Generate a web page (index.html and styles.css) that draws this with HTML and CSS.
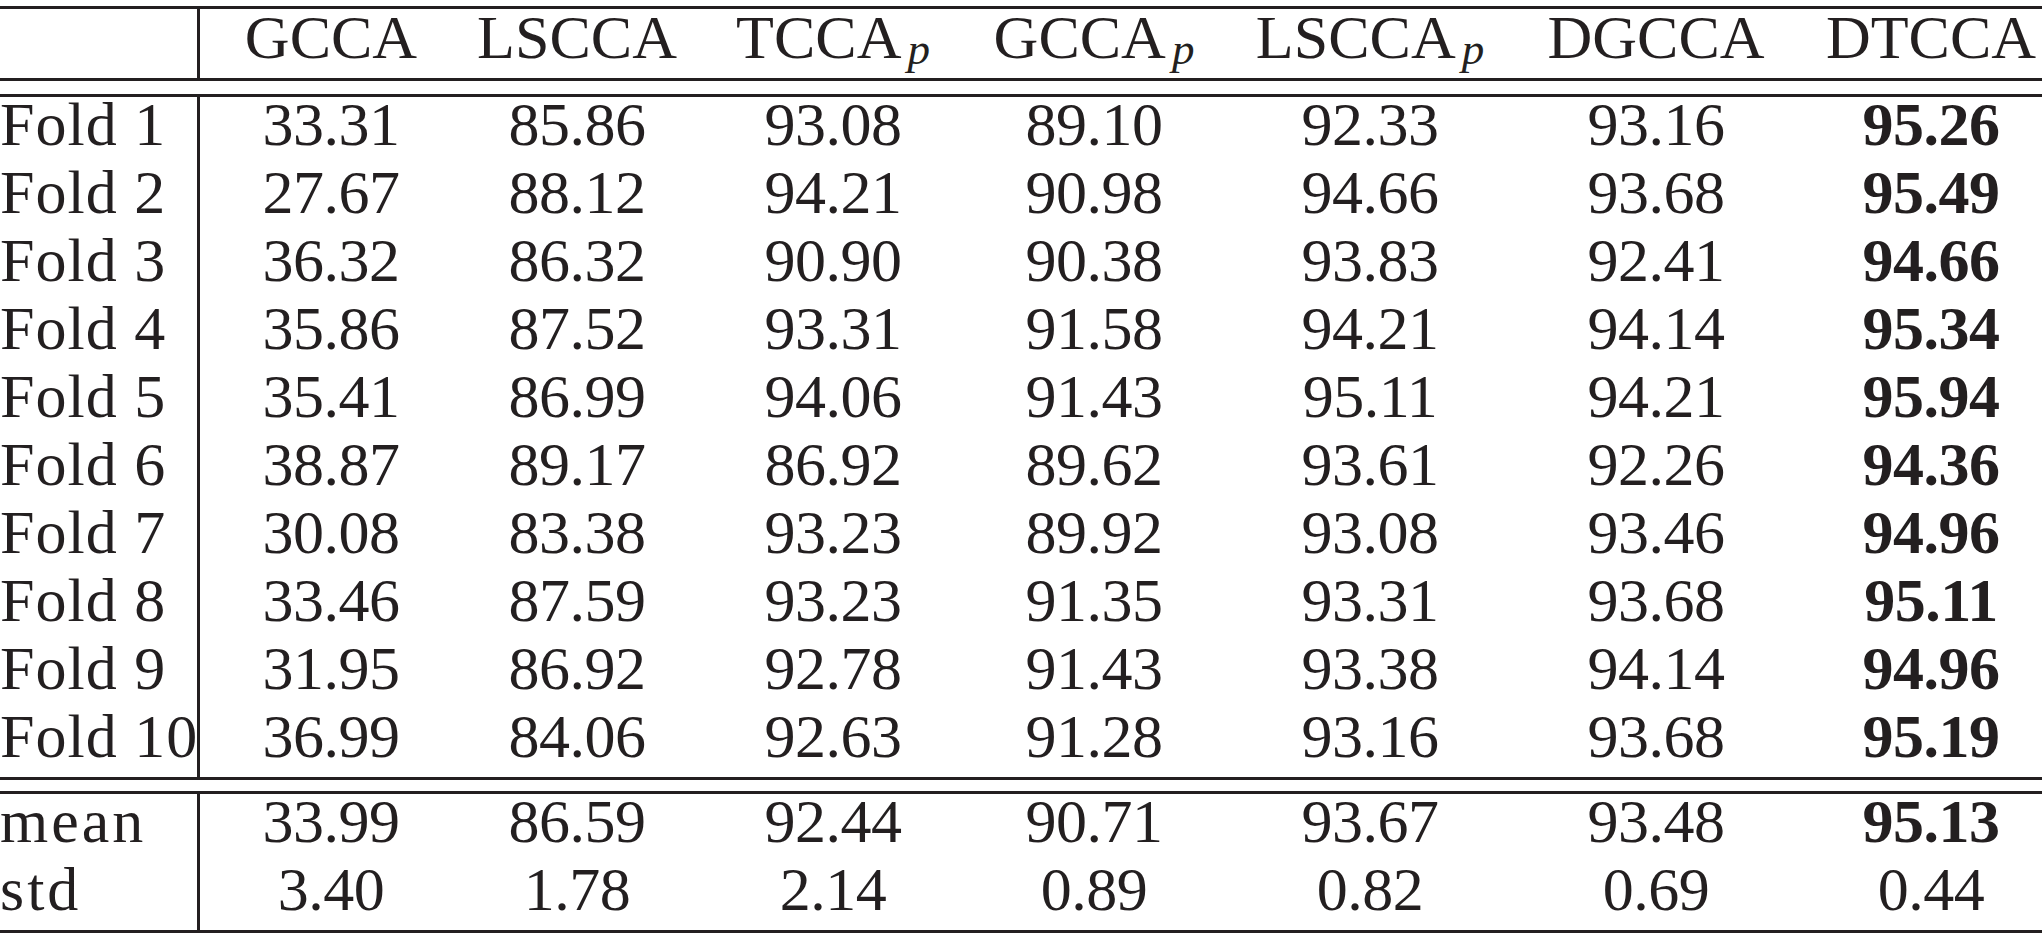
FILE: index.html
```html
<!DOCTYPE html>
<html>
<head>
<meta charset="utf-8">
<link rel="stylesheet" href="styles.css">
</head>
<body>
<div class="table">
  <div class="rule"></div>
  <div class="row head">
    <div class="label"></div>
    <div class="cell">GCCA</div>
    <div class="cell">LSCCA</div>
    <div class="cell">TCCA<sub class="sub">p</sub></div>
    <div class="cell">GCCA<sub class="sub">p</sub></div>
    <div class="cell">LSCCA<sub class="sub">p</sub></div>
    <div class="cell">DGCCA</div>
    <div class="cell">DTCCA</div>
  </div>
  <div class="double double-head"></div>
  <div class="row"><div class="label">Fold 1</div><div class="cell num">33.31</div><div class="cell num">85.86</div><div class="cell num">93.08</div><div class="cell num">89.10</div><div class="cell num">92.33</div><div class="cell num">93.16</div><div class="cell num best">95.26</div></div>
  <div class="row"><div class="label">Fold 2</div><div class="cell num">27.67</div><div class="cell num">88.12</div><div class="cell num">94.21</div><div class="cell num">90.98</div><div class="cell num">94.66</div><div class="cell num">93.68</div><div class="cell num best">95.49</div></div>
  <div class="row"><div class="label">Fold 3</div><div class="cell num">36.32</div><div class="cell num">86.32</div><div class="cell num">90.90</div><div class="cell num">90.38</div><div class="cell num">93.83</div><div class="cell num">92.41</div><div class="cell num best">94.66</div></div>
  <div class="row"><div class="label">Fold 4</div><div class="cell num">35.86</div><div class="cell num">87.52</div><div class="cell num">93.31</div><div class="cell num">91.58</div><div class="cell num">94.21</div><div class="cell num">94.14</div><div class="cell num best">95.34</div></div>
  <div class="row"><div class="label">Fold 5</div><div class="cell num">35.41</div><div class="cell num">86.99</div><div class="cell num">94.06</div><div class="cell num">91.43</div><div class="cell num">95.11</div><div class="cell num">94.21</div><div class="cell num best">95.94</div></div>
  <div class="row"><div class="label">Fold 6</div><div class="cell num">38.87</div><div class="cell num">89.17</div><div class="cell num">86.92</div><div class="cell num">89.62</div><div class="cell num">93.61</div><div class="cell num">92.26</div><div class="cell num best">94.36</div></div>
  <div class="row"><div class="label">Fold 7</div><div class="cell num">30.08</div><div class="cell num">83.38</div><div class="cell num">93.23</div><div class="cell num">89.92</div><div class="cell num">93.08</div><div class="cell num">93.46</div><div class="cell num best">94.96</div></div>
  <div class="row"><div class="label">Fold 8</div><div class="cell num">33.46</div><div class="cell num">87.59</div><div class="cell num">93.23</div><div class="cell num">91.35</div><div class="cell num">93.31</div><div class="cell num">93.68</div><div class="cell num best">95.11</div></div>
  <div class="row"><div class="label">Fold 9</div><div class="cell num">31.95</div><div class="cell num">86.92</div><div class="cell num">92.78</div><div class="cell num">91.43</div><div class="cell num">93.38</div><div class="cell num">94.14</div><div class="cell num best">94.96</div></div>
  <div class="row"><div class="label">Fold 10</div><div class="cell num">36.99</div><div class="cell num">84.06</div><div class="cell num">92.63</div><div class="cell num">91.28</div><div class="cell num">93.16</div><div class="cell num">93.68</div><div class="cell num best">95.19</div></div>
  <div class="double double-foot"></div>
  <div class="row"><div class="label lower">mean</div><div class="cell num">33.99</div><div class="cell num">86.59</div><div class="cell num">92.44</div><div class="cell num">90.71</div><div class="cell num">93.67</div><div class="cell num">93.48</div><div class="cell num best">95.13</div></div>
  <div class="row"><div class="label lower">std</div><div class="cell num">3.40</div><div class="cell num">1.78</div><div class="cell num">2.14</div><div class="cell num">0.89</div><div class="cell num">0.82</div><div class="cell num">0.69</div><div class="cell num">0.44</div></div>
  <div class="rule"></div>
</div>
</body>
</html>
```

FILE: styles.css
```css
html, body {
  margin: 0;
  padding: 0;
  background: #ffffff;
  overflow: hidden;
}

body {
  padding-top: 6px;
  font-family: "Liberation Serif", "Times New Roman", serif;
  color: #231f20;
}

.table {
  width: 2076px;
}

.rule {
  height: 3px;
  background: #231f20;
}

.double {
  border-top: 3px solid #231f20;
  border-bottom: 3px solid #231f20;
}

.double-head {
  height: 13px;
}

.double-foot {
  height: 11px;
}

.row {
  display: grid;
  grid-template-columns: 200px 262px 230px 282px 240px 312px 260px 290px;
  font-size: 62px;
  line-height: 54px;
}

.row > div {
  padding-bottom: 14px;
}

.head > div {
  padding-top: 1px;
}

.label {
  box-sizing: border-box;
  border-right: 3px solid #231f20;
  white-space: nowrap;
  text-align: left;
  letter-spacing: 1px;
}

.label.lower {
  letter-spacing: 3px;
}

.cell {
  text-align: center;
  white-space: nowrap;
}

.num {
  letter-spacing: -0.5px;
}

.best {
  font-weight: bold;
}

.sub {
  font-style: italic;
  font-size: 45px;
  line-height: 0;
  vertical-align: -6px;
  margin-left: 6px;
}
```
